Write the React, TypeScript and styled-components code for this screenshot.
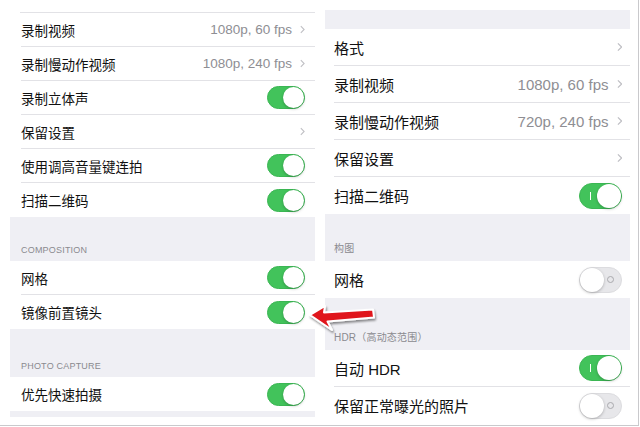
import styled, { createGlobalStyle } from "styled-components";

const GlobalStyle = createGlobalStyle`
  body {
    margin: 0;
    background: #fff;
    font-family: "Liberation Sans", "Noto Sans CJK SC", sans-serif;
    -webkit-font-smoothing: antialiased;
  }
`;

const Canvas = styled.div`
  position: relative;
  width: 639px;
  height: 426px;
  display: grid;
  grid-template-columns: 305px 305px 1fr;
  column-gap: 10px;
  padding-left: 10px;
  box-sizing: border-box;
  border-right: 1px solid #c9c9cc;
  border-bottom: 1px solid #c9c9cc;
  overflow: hidden;
  background: #fff;
`;

const Panel = styled.div<{ $fs: number }>`
  min-width: 0;
  display: flex;
  flex-direction: column;
  font-size: ${(p) => p.$fs}px;
  color: #111;
`;

const Band = styled.div<{ $h: number; $pl: number; $hs?: number }>`
  height: ${(p) => p.$h}px;
  flex-shrink: 0;
  background: #efeff4;
  display: flex;
  align-items: flex-end;
  padding: 0 0 6px ${(p) => p.$pl}px;
  box-sizing: border-box;
  font-size: ${(p) => p.$hs ?? 9}px;
  color: #8a8a8f;
  letter-spacing: 0.2px;
`;

const Spacer = styled.div<{ $h: number }>`
  height: ${(p) => p.$h}px;
  flex-shrink: 0;
`;

const Row = styled.div<{ $h: number; $pl: number }>`
  height: ${(p) => p.$h}px;
  flex-shrink: 0;
  display: flex;
  padding-left: ${(p) => p.$pl}px;
  background: #fff;
`;

const RowBody = styled.div<{ $pr: number; $last?: boolean }>`
  flex: 1;
  min-width: 0;
  display: flex;
  align-items: center;
  justify-content: space-between;
  padding-right: ${(p) => p.$pr}px;
  border-bottom: ${(p) => (p.$last ? "none" : "1px solid #e2e2e6")};
`;

const Label = styled.span`
  white-space: nowrap;
`;

const Detail = styled.span`
  display: flex;
  align-items: center;
  gap: 8px;
  color: #8e8e93;
  white-space: nowrap;
`;

const Track = styled.span<{ $w: number; $h: number; $on: boolean }>`
  position: relative;
  width: ${(p) => p.$w}px;
  height: ${(p) => p.$h}px;
  border-radius: ${(p) => p.$h / 2}px;
  box-sizing: border-box;
  background: ${(p) => (p.$on ? "#42c35b" : "#e7e7ea")};
  border: 1px solid ${(p) => (p.$on ? "#3bb653" : "#dcdcdf")};
  flex-shrink: 0;
`;

const Knob = styled.span<{ $h: number; $on: boolean }>`
  position: absolute;
  top: 0;
  ${(p) => (p.$on ? "right: 0;" : "left: 0;")}
  width: ${(p) => p.$h - 2}px;
  height: ${(p) => p.$h - 2}px;
  border-radius: 50%;
  background: #fff;
  box-shadow: 0 1px 3px rgba(0, 0, 0, 0.25);
`;

const OnMark = styled.span`
  position: absolute;
  left: 10px;
  top: 50%;
  width: 1px;
  height: 8px;
  margin-top: -4px;
  background: #fff;
`;

const OffMark = styled.span`
  position: absolute;
  right: 7px;
  top: 50%;
  width: 5px;
  height: 5px;
  margin-top: -3.5px;
  border: 1px solid #a9a9ad;
  border-radius: 50%;
`;

const ArrowLayer = styled.svg`
  position: absolute;
  left: 300px;
  top: 296px;
  overflow: visible;
`;

function Chevron({ size }: { size: number }) {
  return (
    <svg width={size * 0.55} height={size} viewBox="0 0 6 10">
      <polyline points="1,1 5,5 1,9" fill="none" stroke="#bfbfc4" strokeWidth="1.3" />
    </svg>
  );
}

function Toggle({ on, big }: { on: boolean; big?: boolean }) {
  const w = big ? 43 : 38;
  const h = big ? 26 : 23;
  return (
    <Track $w={w} $h={h} $on={on}>
      {big && on && <OnMark />}
      {big && !on && <OffMark />}
      <Knob $h={h} $on={on} />
    </Track>
  );
}

type Item = { label: string; value?: string; chevron?: boolean; toggle?: boolean; on?: boolean; last?: boolean };

function Rows({ items, h, pl, pr, big }: { items: Item[]; h: number; pl: number; pr: number; big?: boolean }) {
  return (
    <>
      {items.map((it, i) => (
        <Row key={i} $h={h} $pl={pl}>
          <RowBody $pr={pr} $last={it.last}>
            <Label>{it.label}</Label>
            {it.toggle ? (
              <Toggle on={!!it.on} big={big} />
            ) : (
              <Detail>
                {it.value}
                {it.chevron && <Chevron size={big ? 10 : 9} />}
              </Detail>
            )}
          </RowBody>
        </Row>
      ))}
    </>
  );
}

export default function App() {
  return (
    <>
      <GlobalStyle />
      <Canvas>
        <Panel $fs={13.5}>
          <Row $h={13} $pl={10}>
            <RowBody $pr={10} />
          </Row>
          <Rows
            h={34}
            pl={11}
            pr={10}
            items={[
              { label: "录制视频", value: "1080p, 60 fps", chevron: true },
              { label: "录制慢动作视频", value: "1080p, 240 fps", chevron: true },
              { label: "录制立体声", toggle: true, on: true },
              { label: "保留设置", chevron: true },
              { label: "使用调高音量键连拍", toggle: true, on: true },
              { label: "扫描二维码", toggle: true, on: true, last: true },
            ]}
          />
          <Band $h={44} $pl={11}>COMPOSITION</Band>
          <Rows
            h={34}
            pl={11}
            pr={10}
            items={[
              { label: "网格", toggle: true, on: true },
              { label: "镜像前置镜头", toggle: true, on: true, last: true },
            ]}
          />
          <Band $h={48} $pl={11}>PHOTO CAPTURE</Band>
          <Rows h={34} pl={11} pr={10} items={[{ label: "优先快速拍摄", toggle: true, on: true, last: true }]} />
          <Band $h={4} $pl={11} />
        </Panel>

        <Panel $fs={15}>
          <Spacer $h={10} />
          <Band $h={19} $pl={9} />
          <Rows
            h={37}
            pl={9}
            pr={8}
            big
            items={[
              { label: "格式", chevron: true },
              { label: "录制视频", value: "1080p, 60 fps", chevron: true },
              { label: "录制慢动作视频", value: "720p, 240 fps", chevron: true },
              { label: "保留设置", chevron: true },
              { label: "扫描二维码", toggle: true, on: true, last: true },
            ]}
          />
          <Band $h={47} $pl={9} $hs={10}>构图</Band>
          <Rows h={37} pl={9} pr={8} big items={[{ label: "网格", toggle: true, on: false, last: true }]} />
          <Band $h={52} $pl={9} $hs={10}>HDR（高动态范围）</Band>
          <Rows
            h={37}
            pl={9}
            pr={8}
            big
            items={[
              { label: "自动 HDR", toggle: true, on: true },
              { label: "保留正常曝光的照片", toggle: true, on: false, last: true },
            ]}
          />
        </Panel>

        <ArrowLayer width="80" height="40" viewBox="0 0 80 40">
          <defs>
            <filter id="arrowShadow" x="-20%" y="-40%" width="140%" height="180%">
              <feDropShadow dx="1" dy="2" stdDeviation="1.2" floodColor="#000" floodOpacity="0.45" />
            </filter>
          </defs>
          <polygon
            points="10,19 25,10 24,16.5 73,13.5 74,21.5 27.5,25.5 32,34"
            fill="#e0141b"
            stroke="#fff"
            strokeWidth="2"
            strokeLinejoin="round"
            filter="url(#arrowShadow)"
          />
        </ArrowLayer>
      </Canvas>
    </>
  );
}
